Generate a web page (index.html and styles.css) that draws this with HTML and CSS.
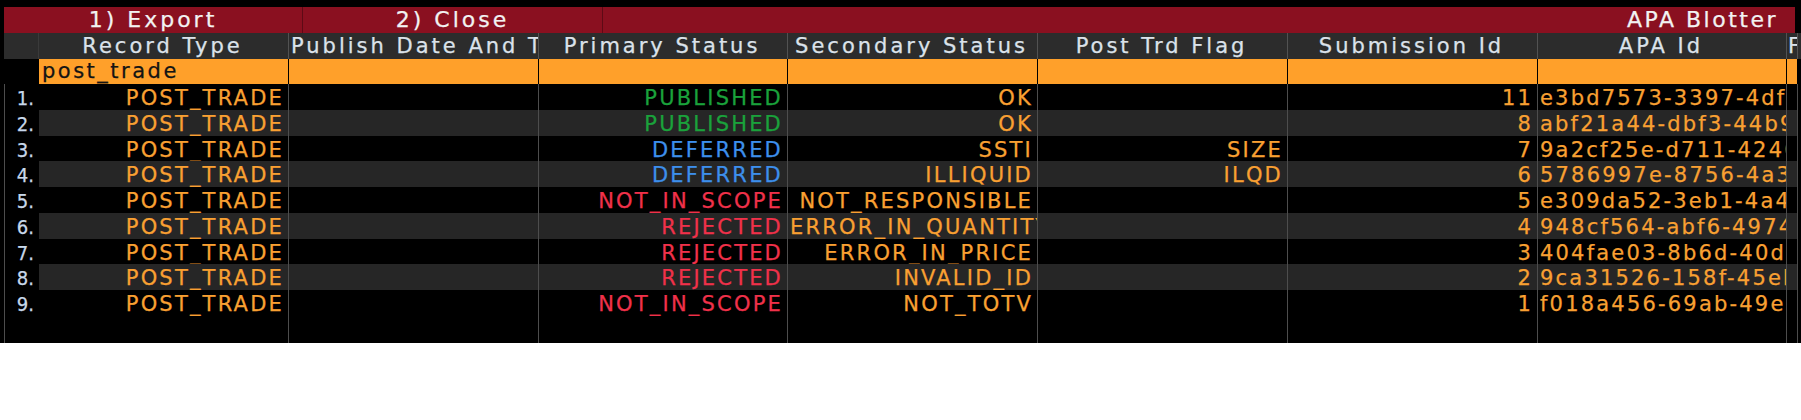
FILE: index.html
```html
<!DOCTYPE html>
<html>
<head>
<meta charset="utf-8">
<title>APA Blotter</title>
<link rel="stylesheet" href="styles.css">
</head>
<body>
<div class="app">
  <div class="toolbar">
    <div class="tb-btn export">1) Export</div>
    <div class="tb-btn close">2) Close</div>
    <div class="tb-title">APA Blotter</div>
  </div>
  <div class="grid">
    <div class="row head">
      <div class="c num"></div>
      <div class="c c1">Record Type</div>
      <div class="c c2">Publish Date And Time</div>
      <div class="c c3">Primary Status</div>
      <div class="c c4">Secondary Status</div>
      <div class="c c5">Post Trd Flag</div>
      <div class="c c6">Submission Id</div>
      <div class="c c7">APA Id</div>
      <div class="c c8">Flags</div>
    </div>
    <div class="row filter">
      <div class="c num"></div>
      <div class="c c1 left">post_trade</div>
      <div class="c c2"></div>
      <div class="c c3"></div>
      <div class="c c4"></div>
      <div class="c c5"></div>
      <div class="c c6"></div>
      <div class="c c7"></div>
      <div class="c c8"></div>
    </div>

    <div class="row data">
      <div class="c num">1.</div>
      <div class="c c1 amber">POST_TRADE</div>
      <div class="c c2"></div>
      <div class="c c3 green">PUBLISHED</div>
      <div class="c c4 amber">OK</div>
      <div class="c c5"></div>
      <div class="c c6 amber">11</div>
      <div class="c c7 amber left">e3bd7573-3397-4df6-9a1e-2c7b5d8f0a41</div>
      <div class="c c8"></div>
    </div>
    <div class="row data alt">
      <div class="c num">2.</div>
      <div class="c c1 amber">POST_TRADE</div>
      <div class="c c2"></div>
      <div class="c c3 green">PUBLISHED</div>
      <div class="c c4 amber">OK</div>
      <div class="c c5"></div>
      <div class="c c6 amber">8</div>
      <div class="c c7 amber left">abf21a44-dbf3-44b9-8c2d-71e0f3a9b652</div>
      <div class="c c8"></div>
    </div>
    <div class="row data">
      <div class="c num">3.</div>
      <div class="c c1 amber">POST_TRADE</div>
      <div class="c c2"></div>
      <div class="c c3 blue">DEFERRED</div>
      <div class="c c4 amber">SSTI</div>
      <div class="c c5 amber">SIZE</div>
      <div class="c c6 amber">7</div>
      <div class="c c7 amber left">9a2cf25e-d711-4246-b03e-5f8a2d1c7e90</div>
      <div class="c c8"></div>
    </div>
    <div class="row data alt">
      <div class="c num">4.</div>
      <div class="c c1 amber">POST_TRADE</div>
      <div class="c c2"></div>
      <div class="c c3 blue">DEFERRED</div>
      <div class="c c4 amber">ILLIQUID</div>
      <div class="c c5 amber">ILQD</div>
      <div class="c c6 amber">6</div>
      <div class="c c7 amber left">5786997e-8756-4a31-9d2f-0b6e4c8a1f37</div>
      <div class="c c8"></div>
    </div>
    <div class="row data">
      <div class="c num">5.</div>
      <div class="c c1 amber">POST_TRADE</div>
      <div class="c c2"></div>
      <div class="c c3 red">NOT_IN_SCOPE</div>
      <div class="c c4 amber">NOT_RESPONSIBLE</div>
      <div class="c c5"></div>
      <div class="c c6 amber">5</div>
      <div class="c c7 amber left">e309da52-3eb1-4a4c-8f61-d2b7a05e9c13</div>
      <div class="c c8"></div>
    </div>
    <div class="row data alt">
      <div class="c num">6.</div>
      <div class="c c1 amber">POST_TRADE</div>
      <div class="c c2"></div>
      <div class="c c3 red">REJECTED</div>
      <div class="c c4 amber">ERROR_IN_QUANTITY</div>
      <div class="c c5"></div>
      <div class="c c6 amber">4</div>
      <div class="c c7 amber left">948cf564-abf6-4974-a1c3-6e2d9b0f5a88</div>
      <div class="c c8"></div>
    </div>
    <div class="row data">
      <div class="c num">7.</div>
      <div class="c c1 amber">POST_TRADE</div>
      <div class="c c2"></div>
      <div class="c c3 red">REJECTED</div>
      <div class="c c4 amber">ERROR_IN_PRICE</div>
      <div class="c c5"></div>
      <div class="c c6 amber">3</div>
      <div class="c c7 amber left">404fae03-8b6d-40d2-b7e9-3a1c5f0d8e24</div>
      <div class="c c8"></div>
    </div>
    <div class="row data alt">
      <div class="c num">8.</div>
      <div class="c c1 amber">POST_TRADE</div>
      <div class="c c2"></div>
      <div class="c c3 red">REJECTED</div>
      <div class="c c4 amber">INVALID_ID</div>
      <div class="c c5"></div>
      <div class="c c6 amber">2</div>
      <div class="c c7 amber left">9ca31526-158f-45eb-9e04-c7a2d61f3b59</div>
      <div class="c c8"></div>
    </div>
    <div class="row data">
      <div class="c num">9.</div>
      <div class="c c1 amber">POST_TRADE</div>
      <div class="c c2"></div>
      <div class="c c3 red">NOT_IN_SCOPE</div>
      <div class="c c4 amber">NOT_TOTV</div>
      <div class="c c5"></div>
      <div class="c c6 amber">1</div>
      <div class="c c7 amber left">f018a456-69ab-49e7-a2d8-4b0c9e16f3a5</div>
      <div class="c c8"></div>
    </div>

    <div class="row filler">
      <div class="c num"></div>
      <div class="c c1"></div>
      <div class="c c2"></div>
      <div class="c c3"></div>
      <div class="c c4"></div>
      <div class="c c5"></div>
      <div class="c c6"></div>
      <div class="c c7"></div>
      <div class="c c8"></div>
    </div>
  </div>
</div>
</body>
</html>
```

FILE: styles.css
```css
html, body {
  margin: 0;
  padding: 0;
  background: #ffffff;
}

.app {
  width: 1801px;
  height: 343px;
  background: #000000;
  padding-left: 4px;
  box-sizing: border-box;
  display: flex;
  flex-direction: column;
  font-family: "DejaVu Sans", "Verdana", sans-serif;
  font-size: 21px;
  letter-spacing: 2.2px;
  -webkit-text-stroke: 0.25px currentColor;
  overflow: hidden;
}

/* ---------- toolbar ---------- */
.toolbar {
  margin-top: 7px;
  width: 1791px;
  height: 26px;
  display: flex;
  background: #8a1020;
  color: #f2f2f2;
  font-size: 22px;
  letter-spacing: 3px;
  line-height: 26px;
}

.tb-btn {
  box-sizing: border-box;
  text-align: center;
  border-right: 1px solid #5e0a15;
  white-space: nowrap;
}

.export { width: 299px; }
.close { width: 300px; }

.tb-title {
  flex: 1;
  text-align: right;
  padding-right: 17px;
  letter-spacing: 2.5px;
  white-space: nowrap;
}

/* ---------- grid ---------- */
.grid {
  flex: 1;
  display: flex;
  flex-direction: column;
}

.row {
  display: flex;
  flex: none;
}

.c {
  box-sizing: border-box;
  flex: none;
  overflow: hidden;
  white-space: nowrap;
  text-align: right;
  padding: 0 4px 0 2px;
  border-right: 1px solid #4d4d4d;
}

.num {
  width: 35px;
  border-right: 0;
  padding: 0 5px 0 0;
}

.c1 { width: 250px; }
.c2 { width: 250px; }
.c3 { width: 249px; }
.c4 { width: 250px; }
.c5 { width: 250px; }
.c6 { width: 250px; }
.c7 { width: 249px; }
.c8 { width: 11px; padding: 0 0 0 1px; text-align: left; }

.left { text-align: left; }

/* header */
.head {
  height: 26px;
  line-height: 26px;
  background: #2c2c2c;
  color: #dbe2ea;
  letter-spacing: 3px;
}

.head .c {
  text-align: center;
  border-right-color: #525252;
}

.head .num {
  border-right: 1px solid #3a3a3a;
}

.head .c8 { text-align: left; }

/* filter row */
.filter {
  height: 25px;
  line-height: 25px;
  color: #141414;
  letter-spacing: 2.5px;
}

.filter .c {
  background: #ffa02a;
  border-right-color: #000000;
}

.filter .num {
  background: #000000;
}

.filter .c1 {
  padding-left: 3px;
}

/* data rows */
.data {
  height: 25.75px;
  line-height: 26px;
}

.data .c {
  padding-top: 1px;
}

.data.alt .c {
  background: #262626;
}

.data .num,
.filler .num {
  border-left: 1px solid #4d4d4d;
  background: #000000;
}

.data.alt .num {
  background: #000000;
}

.num {
  color: #c8d8ea;
  font-family: "Liberation Sans Narrow", "DejaVu Sans Condensed", "DejaVu Sans", sans-serif;
  font-stretch: condensed;
  font-size: 20px;
  letter-spacing: 0;
}

.filler {
  flex: 1;
}

.filler .c8,
.data .c8 {
  border-right-color: #4d4d4d;
}

/* text colours */
.amber { color: #f9a032; }
.green { color: #1aa23b; }
.blue { color: #3d8fec; }
.red { color: #f0314a; }
```
